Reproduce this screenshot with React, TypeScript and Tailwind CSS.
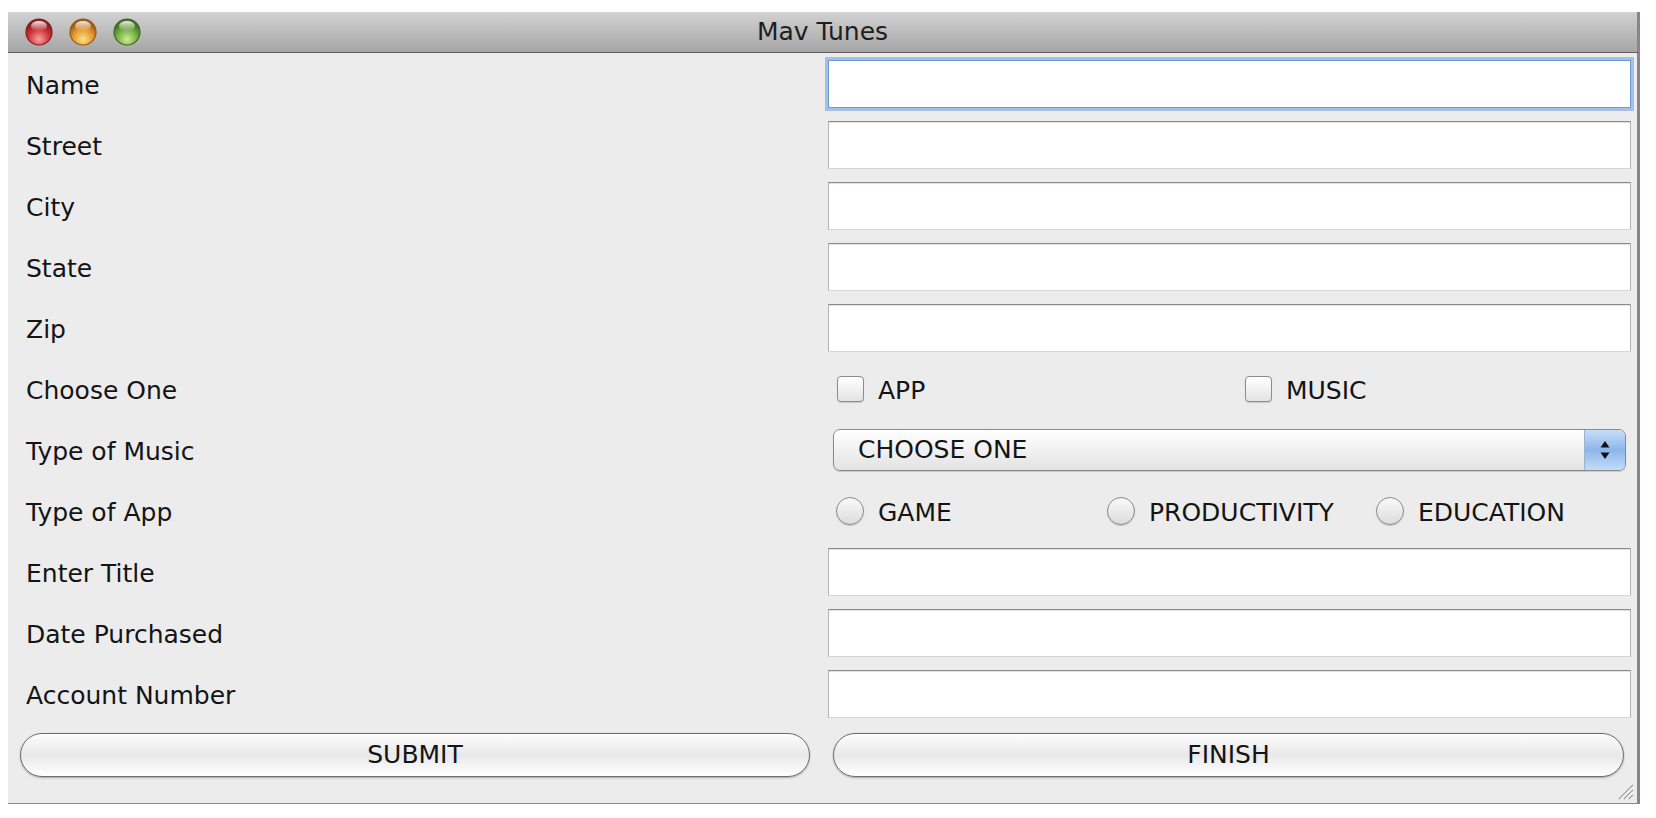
import React from "react";

/**
 * Mav Tunes order form, drawn as an old Aqua style window.
 */

const fields = ["Name", "Street", "City", "State", "Zip"];
const laterFields = ["Enter Title", "Date Purchased", "Account Number"];

function TrafficLight({ id, edge, base, glow }: { id: string; edge: string; base: string; glow: string }) {
  return (
    <svg width="28" height="28" viewBox="0 0 28 28" aria-hidden="true">
      <defs>
        <radialGradient id={`${id}-body`} cx="50%" cy="78%" r="65%">
          <stop offset="0%" stopColor={glow} />
          <stop offset="60%" stopColor={base} />
          <stop offset="100%" stopColor={edge} />
        </radialGradient>
        <linearGradient id={`${id}-shine`} x1="0" y1="0" x2="0" y2="1">
          <stop offset="0%" stopColor="#ffffff" stopOpacity="0.9" />
          <stop offset="100%" stopColor="#ffffff" stopOpacity="0" />
        </linearGradient>
      </defs>
      <circle cx="14" cy="14" r="13" fill={`url(#${id}-body)`} stroke={edge} strokeWidth="1.2" />
      <ellipse cx="14" cy="8" rx="8" ry="5" fill={`url(#${id}-shine)`} />
    </svg>
  );
}

function TextField({ focused }: { focused?: boolean }) {
  if (focused) {
    return (
      <div className="h-[48px] w-full bg-white border border-[#6f9bd4] shadow-[0_0_0_3px_#a3c0e6]" />
    );
  }
  return (
    <div className="h-[48px] w-full bg-white border border-t-[#8a8a8a] border-x-[#b4b4b4] border-b-[#d6d6d6] shadow-[inset_0_1px_1px_rgba(0,0,0,0.12)]" />
  );
}

function Label({ children }: { children: React.ReactNode }) {
  return <div className="w-[820px] shrink-0 pl-[18px] pt-[5px] text-[25px] text-[#141414]">{children}</div>;
}

function Checkbox({ label, width }: { label: string; width?: string }) {
  return (
    <label className={`flex shrink-0 items-center gap-[14px] ${width ?? ""}`}>
      <span className="block h-[26px] w-[27px] rounded-[4px] border border-[#8c8c8c] bg-gradient-to-b from-white to-[#e4e4e4] shadow-[0_1px_1px_rgba(0,0,0,0.15)]" />
      <span className="pt-[5px] text-[25px] text-[#141414]">{label}</span>
    </label>
  );
}

function Radio({ label, width }: { label: string; width?: string }) {
  return (
    <label className={`flex shrink-0 items-center gap-[14px] ${width ?? ""}`}>
      <span className="block h-[28px] w-[28px] rounded-full border border-[#8a8a8a] bg-gradient-to-b from-[#fafafa] to-[#dcdcdc] shadow-[0_1px_1px_rgba(0,0,0,0.18)]" />
      <span className="pt-[5px] text-[25px] text-[#141414]">{label}</span>
    </label>
  );
}

function Row({ children }: { children: React.ReactNode }) {
  return <div className="flex h-[61px] items-center">{children}</div>;
}

export default function App() {
  return (
    <div className="min-h-screen bg-white" style={{ fontFamily: '"DejaVu Sans", "Liberation Sans", sans-serif' }}>
      <div className="ml-[8px] pt-[12px] w-[1632px]">
        {/* Title bar */}
        <div className="relative flex h-[41px] items-center justify-center border-b border-[#5e5e5e] bg-gradient-to-b from-[#d2d2d2] to-[#a6a6a6] border-r-[3px] border-r-[#8d8290]">
          <div className="absolute left-[17px] top-[6px] flex gap-[16px]">
            <TrafficLight id="close" edge="#8a1c1f" base="#d1363a" glow="#f4a3a3" />
            <TrafficLight id="min" edge="#9a5a14" base="#e59a2f" glow="#fbe08a" />
            <TrafficLight id="zoom" edge="#3d6e1f" base="#74b042" glow="#cdeb9a" />
          </div>
          <span className="text-[25px] text-[#1e1e1e]">Mav Tunes</span>
        </div>

        {/* Content */}
        <div className="relative bg-[#ececec] border-r-[3px] border-[#8d8290] border-b border-b-[#8a8a8a]">
          {fields.map((f, i) => (
            <Row key={f}>
              <Label>{f}</Label>
              <div className="flex-1 pr-[6px]">
                <TextField focused={i === 0} />
              </div>
            </Row>
          ))}

          <Row>
            <Label>Choose One</Label>
            <div className="flex flex-1 items-center pl-[9px] pr-[6px]">
              <Checkbox label="APP" width="w-[408px]" />
              <Checkbox label="MUSIC" />
            </div>
          </Row>

          <Row>
            <Label>Type of Music</Label>
            <div className="flex-1 pl-[5px] pr-[11px]">
              <div className="flex h-[42px] items-stretch rounded-[7px] border border-[#8a8a8a] bg-gradient-to-b from-white via-[#f1f1f1] to-[#e3e3e3] shadow-[0_1px_1px_rgba(0,0,0,0.15)]">
                <span className="flex flex-1 items-center pl-[24px] text-[25px] text-[#141414]">CHOOSE ONE</span>
                <span className="flex w-[41px] items-center justify-center rounded-r-[6px] border-l border-[#9fb3cc] bg-gradient-to-b from-[#c9def7] via-[#8cb6ea] to-[#c3dcf8]">
                  <svg width="12" height="24" viewBox="0 0 12 24" aria-hidden="true">
                    <path d="M6 3 L10.5 9.5 L1.5 9.5 Z" fill="#111" />
                    <path d="M6 21 L10.5 14.5 L1.5 14.5 Z" fill="#111" />
                  </svg>
                </span>
              </div>
            </div>
          </Row>

          <Row>
            <Label>Type of App</Label>
            <div className="flex flex-1 items-center pl-[8px] pr-[6px]">
              <Radio label="GAME" width="w-[271px]" />
              <Radio label="PRODUCTIVITY" width="w-[269px]" />
              <Radio label="EDUCATION" />
            </div>
          </Row>

          {laterFields.map((f) => (
            <Row key={f}>
              <Label>{f}</Label>
              <div className="flex-1 pr-[6px]">
                <TextField />
              </div>
            </Row>
          ))}

          {/* Buttons */}
          <div className="flex pt-[9px] pb-[26px]">
            <div className="w-[820px] shrink-0 pl-[12px] pr-[18px]">
              <button className="h-[44px] w-full rounded-full border border-[#6c6c6c] bg-gradient-to-b from-[#fefefe] via-[#e8e8e8] to-white text-[25px] text-[#141414] shadow-[0_1px_2px_rgba(0,0,0,0.3)]">
                SUBMIT
              </button>
            </div>
            <div className="flex-1 pl-[5px] pr-[13px]">
              <button className="h-[44px] w-full rounded-full border border-[#6c6c6c] bg-gradient-to-b from-[#fefefe] via-[#e8e8e8] to-white text-[25px] text-[#141414] shadow-[0_1px_2px_rgba(0,0,0,0.3)]">
                FINISH
              </button>
            </div>
          </div>

          {/* Resize grip */}
          <svg className="absolute bottom-[3px] right-[3px]" width="20" height="20" viewBox="0 0 20 20" aria-hidden="true">
            <path d="M19 5 L5 19 M19 10 L10 19 M19 15 L15 19" stroke="#9a9a9a" strokeWidth="1.2" />
            <path d="M19 6.5 L6.5 19 M19 11.5 L11.5 19 M19 16.5 L16.5 19" stroke="#ffffff" strokeWidth="1" />
          </svg>
        </div>
      </div>
    </div>
  );
}
